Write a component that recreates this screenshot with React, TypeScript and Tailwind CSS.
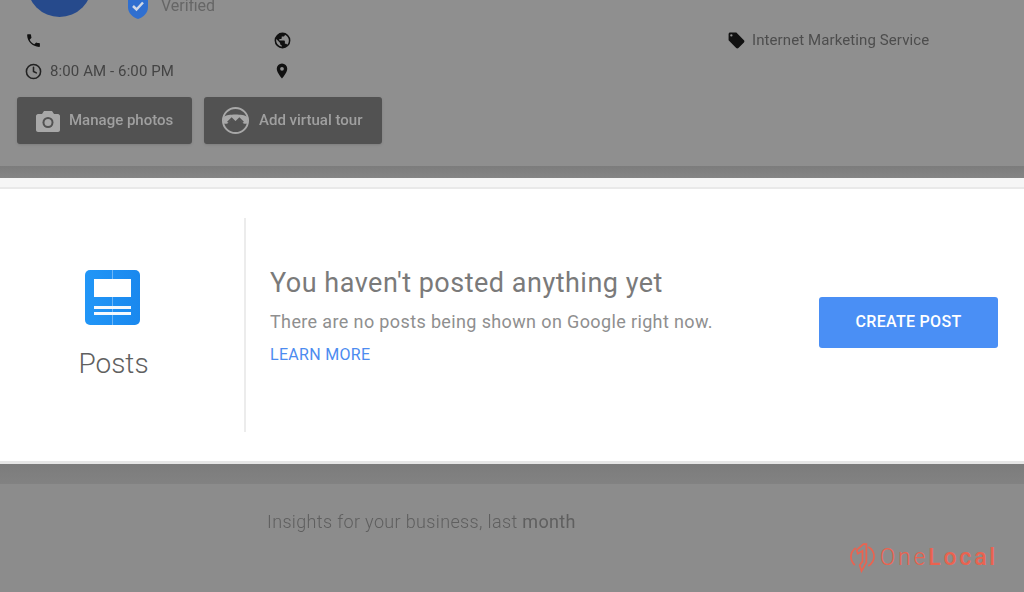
import { Clock } from "lucide-react";

function Phone() {
  return (
    <svg viewBox="0 0 24 24" className="w-[17px] h-[17px] fill-[#111]">
      <path d="M6.6 10.8c1.4 2.8 3.8 5.100 6.600 6.600l2.200-2.200c.3-.3.700-.4 1-.2 1.100.4 2.300.6 3.600.6.600 0 1 .4 1 1V20c0 .6-.4 1-1 1C10.600 21 3 13.400 3 4c0-.6.400-1 1-1h3.500c.6 0 1 .4 1 1 0 1.300.2 2.500.6 3.600.1.300 0 .7-.2 1z" />
    </svg>
  );
}

function Globe() {
  return (
    <svg viewBox="0 0 24 24" className="w-[19px] h-[19px] fill-[#111]">
      <path d="M12 2a10 10 0 1 0 0 20 10 10 0 0 0 0-20zm-1 17.900A8 8 0 0 1 4.200 10.200L9 15v1c0 1.100.9 2 2 2v1.900zm6.900-2.500c-.3-.8-1-1.400-1.900-1.400h-1v-3c0-.6-.4-1-1-1H8v-2h2c.6 0 1-.4 1-1V7h2c1.100 0 2-.9 2-2v-.4a8 8 0 0 1 2.900 12.800z" />
    </svg>
  );
}

function Pin() {
  return (
    <svg viewBox="0 0 24 24" className="w-[18px] h-[18px] fill-[#111]">
      <path d="M12 2a7 7 0 0 0-7 7c0 5.200 7 13 7 13s7-7.800 7-13a7 7 0 0 0-7-7zm0 9.500a2.500 2.500 0 1 1 0-5 2.500 2.500 0 0 1 0 5z" />
    </svg>
  );
}

function Tag() {
  return (
    <svg viewBox="0 0 24 24" className="w-[19px] h-[19px] fill-[#111]">
      <path d="M21.400 11.600l-9-9C12 2.200 11.500 2 11 2H4c-1.100 0-2 .9-2 2v7c0 .6.200 1.100.6 1.400l9 9c.4.400.9.600 1.400.600s1.100-.2 1.400-.6l7-7c.4-.4.600-.9.600-1.400s-.2-1.100-.6-1.400zM5.500 7a1.500 1.500 0 1 1 0-3 1.500 1.500 0 0 1 0 3z" />
    </svg>
  );
}

function Shield() {
  return (
    <svg viewBox="0 0 20 24" className="w-[20px] h-[24px]">
      <path d="M10 0l10 3v9c0 6-4.500 10-10 12C4.500 22 0 18 0 12V3z" fill="#2f6fd0" />
      <path d="M5 11l3.500 3.500L15 7.500" fill="none" stroke="#cfd8e6" strokeWidth="2.500" />
    </svg>
  );
}

function CameraIcon() {
  return (
    <svg viewBox="0 0 24 22" className="w-[24px] h-[22px]">
      <path d="M8 1h8l2 3h4c1 0 2 1 2 2v14c0 1-1 2-2 2H2c-1 0-2-1-2-2V6c0-1 1-2 2-2h4z" fill="#a8a8a8" />
      <circle cx="12" cy="12.500" r="5.500" fill="#525252" />
      <circle cx="12" cy="12.500" r="3.500" fill="#a8a8a8" />
    </svg>
  );
}

function TourIcon() {
  return (
    <svg viewBox="0 0 30 30" className="w-[29px] h-[29px]">
      <circle cx="15" cy="15" r="13" fill="none" stroke="#a8a8a8" strokeWidth="2" />
      <path d="M3 11c4-3 20-3 24 0v7c-2 1-4 0-5-1l-3-3-4 3-4-3-3 3c-1 1-3 2-5 1z" fill="#a8a8a8" />
      <path d="M7 17l4-4 4 4 4-4 4 4" fill="none" stroke="#525252" strokeWidth="2" />
    </svg>
  );
}

function PostsIcon() {
  return (
    <div className="relative w-[55px] h-[55px] mr-[3px] rounded-[5px] bg-gradient-to-r from-[#2196f7] to-[#1a88ee] flex flex-col items-center pt-[9px]">
      <div className="absolute top-0 bottom-0 left-[27px] w-px bg-[#6cb6f8]" />
      <div className="relative w-[37px] h-[18px] bg-white" />
      <div className="relative w-[37px] h-[3px] bg-[#f4f8fd] mt-[9px]" />
      <div className="relative w-[37px] h-[3px] bg-[#f4f8fd] mt-[3px]" />
    </div>
  );
}

function LogoMark() {
  return (
    <svg viewBox="0 0 26 32" className="w-[25px] h-[31px]" fill="none" stroke="#ea6350" strokeWidth="1.800">
      <path d="M6 6C2 9 1 12 1 15c0 4 2 7 4 9" />
      <path d="M19 5c4 2 6 6 6 10 0 5-3 8-6 10" />
      <path d="M7 8l7-6h3v19l-5 9-2-6 3-4V9l-5 3z" />
    </svg>
  );
}

export default function App() {
  return (
    <div className="w-[1024px] h-[592px] overflow-hidden flex flex-col bg-[#8c8c8c] font-['Roboto',sans-serif]">
      {/* dimmed profile card */}
      <div className="h-[178px] shrink-0 flex flex-col bg-[#8f8f8f]">
        <div className="flex-1 pl-[17px] blur-[0.6px]">
          <div className="flex h-[17px] pl-[10px]">
            <div className="w-[65px] h-[65px] -mt-[48px] rounded-full bg-[#264a8c] shrink-0" />
            <div className="ml-[36px] -mt-[5px] shrink-0">
              <Shield />
            </div>
            <span className="ml-[13px] -mt-[4px] text-[16px] leading-5 text-[#666]">Verified</span>
          </div>

          <div className="mt-[12px] grid grid-cols-[248px_454px_1fr] h-[20px] items-center pl-[8px]">
            <div>
              <Phone />
            </div>
            <div>
              <Globe />
            </div>
            <div className="flex items-center gap-[6px]">
              <Tag />
              <span className="text-[15px] tracking-[0.1px] text-[#4d4d4d]">Internet Marketing Service</span>
            </div>
          </div>

          <div className="mt-[11px] grid grid-cols-[248px_1fr] h-[20px] items-center pl-[8px]">
            <div className="flex items-center gap-[8px]">
              <Clock size={17} strokeWidth={2.2} className="text-[#222]" />
              <span className="text-[15px] tracking-[0.1px] text-[#444]">8:00 AM - 6:00 PM</span>
            </div>
            <div>
              <Pin />
            </div>
          </div>

          <div className="mt-[17px] flex gap-[12px]">
            <div className="w-[175px] h-[47px] rounded-[3px] bg-[#525252] flex items-center pl-[19px] gap-[9px] shadow-sm">
              <CameraIcon />
              <span className="text-[15px] font-medium text-[#a0a0a0]">Manage photos</span>
            </div>
            <div className="w-[178px] h-[47px] rounded-[3px] bg-[#525252] flex items-center pl-[17px] gap-[9px] shadow-sm">
              <TourIcon />
              <span className="text-[15px] font-medium text-[#a0a0a0]">Add virtual tour</span>
            </div>
          </div>
        </div>
        <div className="h-[12px] bg-gradient-to-b from-[#7c7c7c] to-[#858585]" />
      </div>

      {/* highlighted posts card */}
      <div className="h-[286px] shrink-0 flex flex-col bg-white">
        <div className="h-[11px] bg-[#f6f6f6] border-b-2 border-[#e9e9e9]" />
        <div className="flex-1 flex pt-[29px] pb-[29px]">
          <div className="w-[244px] shrink-0 border-r-[2px] border-[#ececec] box-content flex flex-col items-center pt-[52px]">
            <div className="-ml-[17px] flex flex-col items-center">
              <PostsIcon />
              <span className="mt-[21px] text-[28px] leading-9 font-light text-[#606060]">Posts</span>
            </div>
          </div>
          <div className="pl-[24px] pt-[47px] flex-1">
            <h2 className="text-[27px] leading-9 font-normal tracking-[0.5px] text-[#7a7a7a]">
              You haven't posted anything yet
            </h2>
            <p className="mt-[9px] text-[18px] leading-6 tracking-[0.37px] text-[#8f8f8f]">
              There are no posts being shown on Google right now.
            </p>
            <a className="block mt-[9px] text-[16px] leading-6 tracking-[0.3px] text-[#4c8bf0]">LEARN MORE</a>
          </div>
          <div className="pr-[26px] pt-[79px]">
            <button className="w-[179px] h-[51px] pb-[2px] rounded-[3px] bg-[#4a8ff5] text-white text-[16px] font-medium tracking-[0.3px]">
              CREATE POST
            </button>
          </div>
        </div>
        <div className="h-[3px] bg-[#e6e6e6]" />
      </div>

      {/* dimmed insights card */}
      <div className="flex-1 flex flex-col">
        <div className="h-[20px] bg-gradient-to-b from-[#7c7c7c] to-[#828282]" />
        <div className="flex-1 relative pl-[267px] pt-[26px]">
          <p className="text-[18px] leading-6 font-light tracking-[0.35px] text-[#5f5f5f] blur-[0.3px]">
            Insights for your business, last <span className="font-normal">month</span>
          </p>
          <div className="absolute right-[26px] bottom-[19px] flex items-center gap-[5px] text-[#ea6350]">
            <LogoMark />
            <span className="text-[23px] leading-none font-light tracking-[2.8px]">
              One<span className="font-medium">Local</span>
            </span>
          </div>
        </div>
      </div>
    </div>
  );
}
